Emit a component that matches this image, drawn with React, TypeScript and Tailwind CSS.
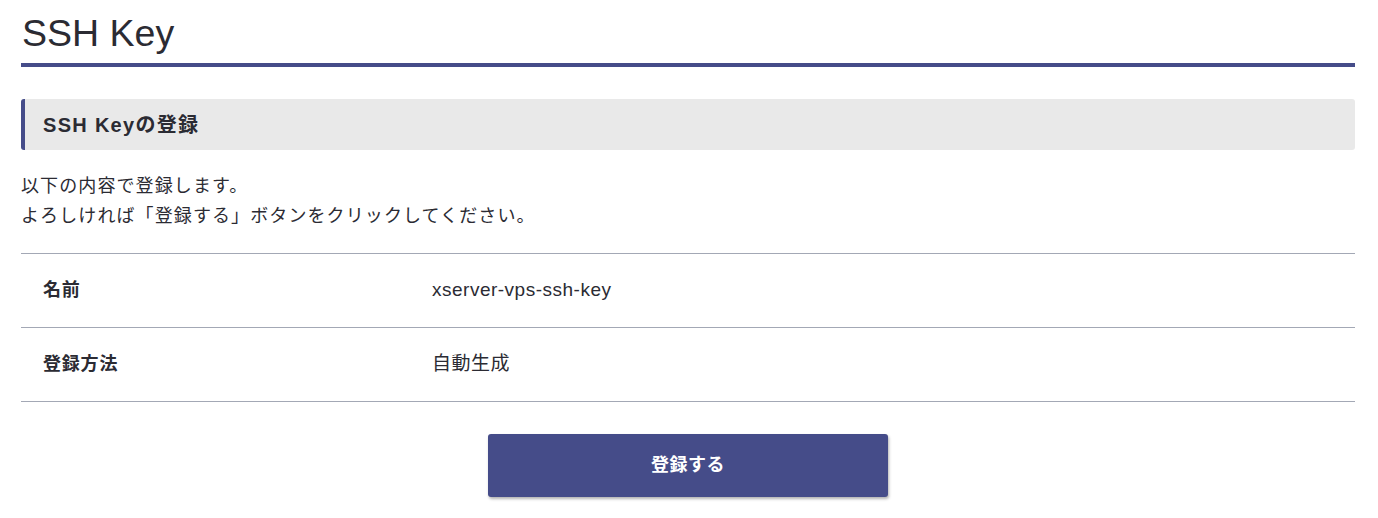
export default function App() {
  const rows = [
    { label: '名前', value: 'xserver-vps-ssh-key' },
    { label: '登録方法', value: '自動生成' },
  ];

  return (
    <div
      className="min-h-screen bg-white pl-[21px] pr-[23px] pt-[12px] text-[#2b2b33]"
      style={{ fontFamily: '"Liberation Sans", "Noto Sans CJK JP", sans-serif' }}
    >
      {/* Page title */}
      <h1 className="border-b-4 border-[#454c89] pb-[8px] pl-[1px] text-[37.5px] leading-[43px] font-normal">
        SSH Key
      </h1>

      {/* Section header */}
      <div className="mt-[32px] flex h-[51px] items-center rounded-[3px] border-l-4 border-[#454c89] bg-[#e9e9e9] pl-[18px]">
        <h2 className="text-[20px] font-bold tracking-[1.3px]">SSH Keyの登録</h2>
      </div>

      <p className="mt-[21px] text-[18px] leading-[30px] tracking-[1.1px]">
        以下の内容で登録します。
        <br />
        よろしければ「登録する」ボタンをクリックしてください。
      </p>

      {/* Confirmation table */}
      <div className="mt-[22px] border-t border-[#a3a8b5]">
        {rows.map((row) => (
          <div key={row.label} className="flex h-[74px] items-center border-b border-[#a3a8b5]">
            <div className="w-[411px] pl-[22px] text-[18px] font-bold tracking-[0.8px]">{row.label}</div>
            <div className="text-[19px] tracking-[0.5px]">{row.value}</div>
          </div>
        ))}
      </div>

      <div className="mt-[32px] flex justify-center">
        <button className="h-[63px] w-[400px] rounded-[3px] bg-[#454c89] text-[18px] font-bold tracking-[0.5px] text-white shadow-[1px_2px_3px_rgba(0,0,0,0.3)]">
          登録する
        </button>
      </div>
    </div>
  );
}
